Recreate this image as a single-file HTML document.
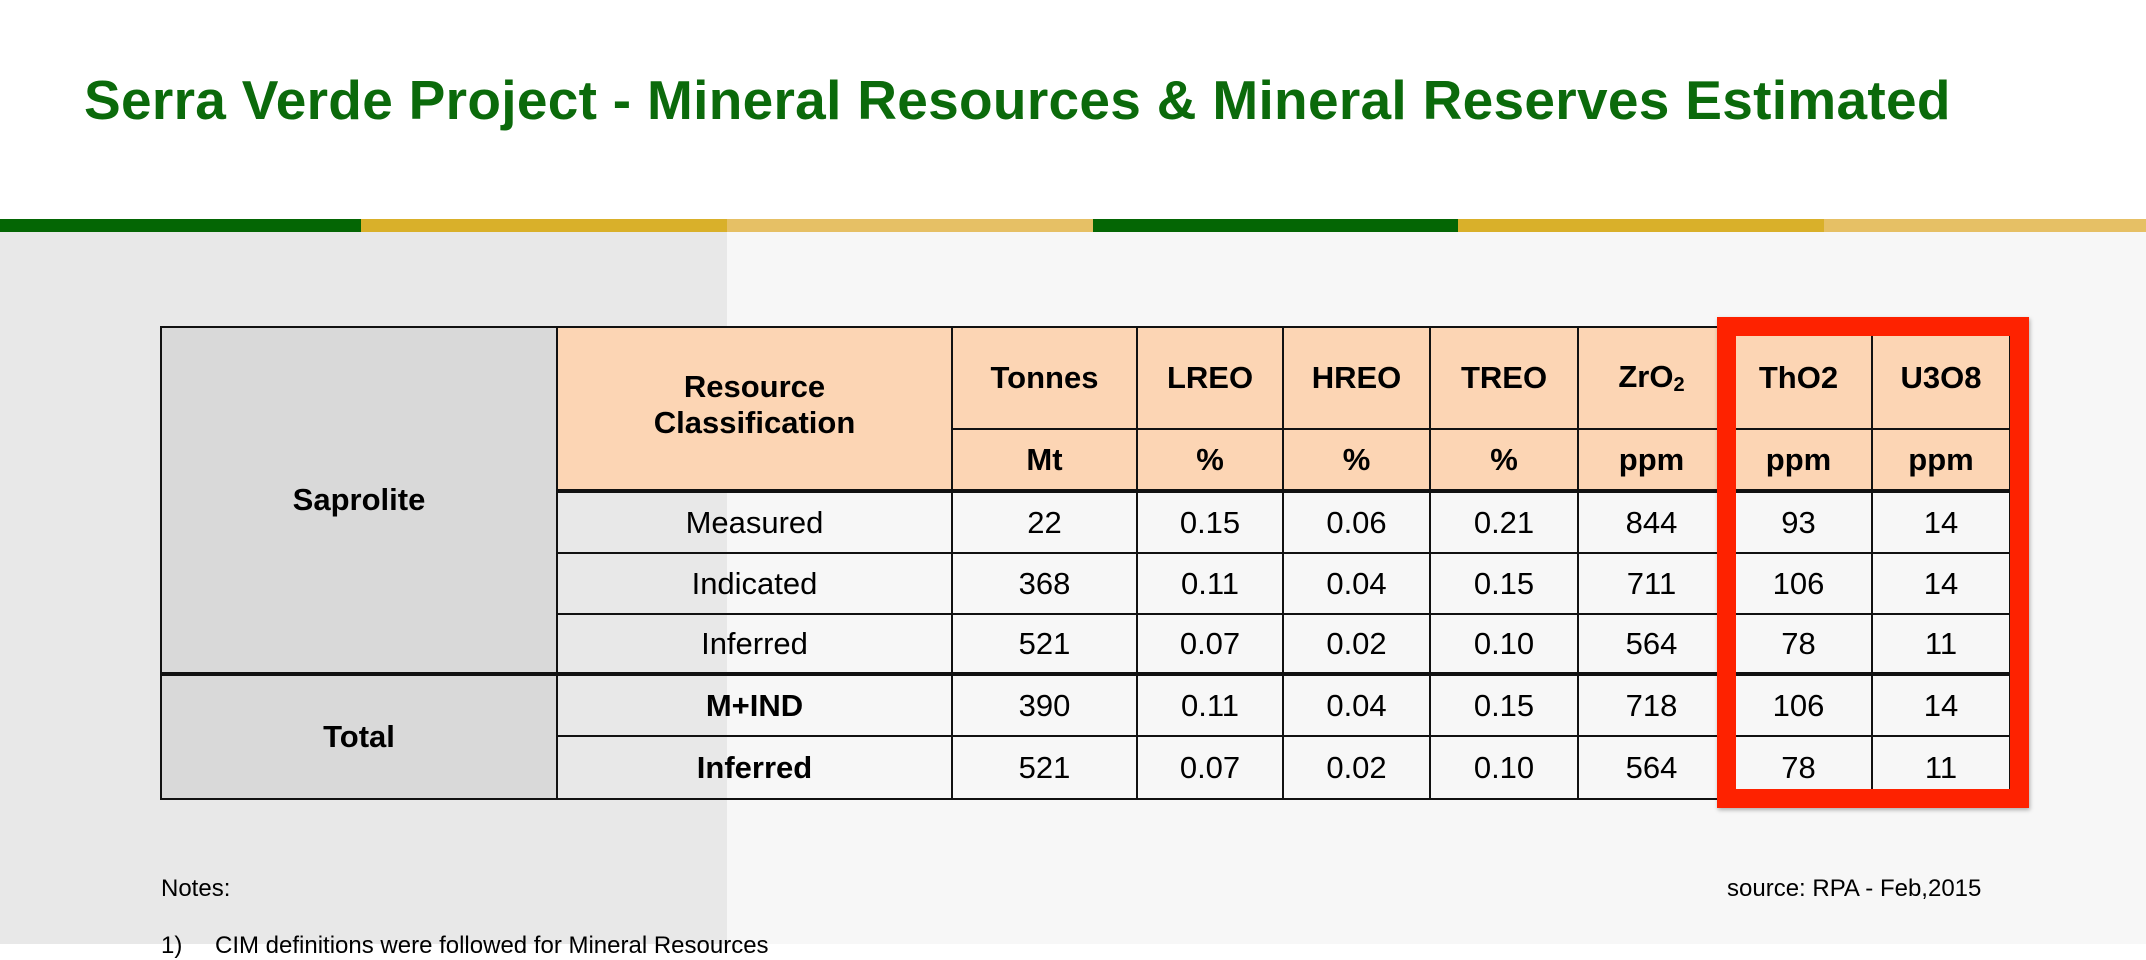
<!DOCTYPE html>
<html><head><meta charset="utf-8"><style>
*{margin:0;padding:0;box-sizing:border-box}
body{width:2146px;height:944px;overflow:hidden;background:#fff;position:relative;font-family:"Liberation Sans",Arial,sans-serif}
.title{position:absolute;left:84px;top:68px;font-size:55px;font-weight:bold;color:#0b6a0b;white-space:nowrap;letter-spacing:0.3px}
.stripe{position:absolute;top:219px;height:13px}
.bgl{position:absolute;left:0;top:232px;width:727px;height:712px;background:#e8e8e8}
.bgr{position:absolute;left:727px;top:232px;width:1419px;height:712px;background:#f7f7f7}
table{position:absolute;left:160px;top:326px;border-collapse:collapse;table-layout:fixed;width:1849px}
td{border:2px solid #111;text-align:center;vertical-align:middle;font-size:31px;color:#000;padding:0;line-height:1.15}
.h td,.hh{background:#fcd5b4;font-weight:bold}
.g{background:#d9d9d9;font-weight:bold}
.b{font-weight:bold}
.thick td{border-top:4px solid #111}
.red{position:absolute;left:1717px;top:317px;width:312px;height:491px;border:19px solid #fe2200;box-shadow:1px 2px 4px rgba(0,0,0,.3)}
.n{position:absolute;font-size:24px;color:#000}
sub{font-size:20px;vertical-align:-4px}
</style></head><body>
<div class="title">Serra Verde Project - Mineral Resources &amp; Mineral Reserves Estimated</div>
<div class="stripe" style="left:0;width:361px;background:#046604"></div>
<div class="stripe" style="left:361px;width:366px;background:#d9b02a"></div>
<div class="stripe" style="left:727px;width:366px;background:#e6c065"></div>
<div class="stripe" style="left:1093px;width:365px;background:#046604"></div>
<div class="stripe" style="left:1458px;width:366px;background:#d9b02a"></div>
<div class="stripe" style="left:1824px;width:322px;background:#e6c065"></div>
<div class="bgl"></div><div class="bgr"></div>
<table>
<colgroup><col style="width:396px"><col style="width:395px"><col style="width:185px"><col style="width:146px"><col style="width:147px"><col style="width:148px"><col style="width:147px"><col style="width:147px"><col style="width:138px"></colgroup>
<tr class="h" style="height:102px"><td class="g" rowspan="5" style="background:#d9d9d9">Saprolite</td><td rowspan="2" style="padding-bottom:8px">Resource<br>Classification</td><td>Tonnes</td><td>LREO</td><td>HREO</td><td>TREO</td><td>ZrO<sub>2</sub></td><td>ThO2</td><td>U3O8</td></tr>
<tr class="h" style="height:62px"><td>Mt</td><td>%</td><td>%</td><td>%</td><td>ppm</td><td>ppm</td><td>ppm</td></tr>
<tr style="height:62px" class="thick"><td>Measured</td><td>22</td><td>0.15</td><td>0.06</td><td>0.21</td><td>844</td><td>93</td><td>14</td></tr>
<tr style="height:61px"><td>Indicated</td><td>368</td><td>0.11</td><td>0.04</td><td>0.15</td><td>711</td><td>106</td><td>14</td></tr>
<tr style="height:60px"><td>Inferred</td><td>521</td><td>0.07</td><td>0.02</td><td>0.10</td><td>564</td><td>78</td><td>11</td></tr>
<tr style="height:62px" class="thick"><td class="g" rowspan="2">Total</td><td class="b">M+IND</td><td>390</td><td>0.11</td><td>0.04</td><td>0.15</td><td>718</td><td>106</td><td>14</td></tr>
<tr style="height:63px"><td class="b">Inferred</td><td>521</td><td>0.07</td><td>0.02</td><td>0.10</td><td>564</td><td>78</td><td>11</td></tr>
</table>
<div class="red"></div>
<div class="n" style="left:161px;top:875px">Notes:</div>
<div class="n" style="left:1727px;top:875px">source: RPA - Feb,2015</div>
<div class="n" style="left:161px;top:932px">1)</div>
<div class="n" style="left:215px;top:932px">CIM definitions were followed for Mineral Resources</div>
</body></html>
